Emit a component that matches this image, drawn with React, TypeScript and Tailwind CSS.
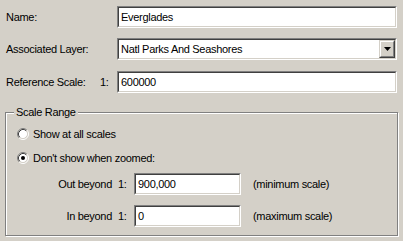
import React from "react";

const sunken =
  "border border-t-[#808080] border-l-[#808080] border-r-white border-b-white";
const sunkenInner =
  "border border-t-[#404040] border-l-[#404040] border-r-[#d4d0c8] border-b-[#d4d0c8]";

function Edit({ value, className }: { value: string; className: string }) {
  return (
    <div className={`${sunken} ${className} h-[22px]`}>
      <div className={`${sunkenInner} h-full bg-white flex items-center pl-[2px] whitespace-nowrap overflow-hidden`}>
        {value}
      </div>
    </div>
  );
}

function Radio({ checked }: { checked?: boolean }) {
  return (
    <svg width="12" height="12" viewBox="0 0 12 12" className="shrink-0">
      <circle cx="6" cy="6" r="4.5" fill="#fff" />
      <path d="M2.11 9.89 A5.5 5.5 0 0 1 9.89 2.11" stroke="#808080" fill="none" />
      <path d="M9.89 2.11 A5.5 5.5 0 0 1 2.11 9.89" stroke="#fff" fill="none" />
      <path d="M2.82 9.18 A4.5 4.5 0 0 1 9.18 2.82" stroke="#404040" fill="none" />
      <path d="M9.18 2.82 A4.5 4.5 0 0 1 2.82 9.18" stroke="#d4d0c8" fill="none" />
      {checked && <circle cx="6" cy="6" r="2" fill="#000" />}
    </svg>
  );
}

export default function App() {
  return (
    <div
      className="w-[403px] h-[241px] bg-[#d4d0c8] text-black overflow-hidden text-[11px] tracking-[-0.3px] leading-none pt-[6px]"
      style={{ fontFamily: '"Liberation Sans", Arial, sans-serif' }}
    >
      <div className="flex items-center pl-[6px]">
        <div className="w-[111px]">Name:</div>
        <Edit value="Everglades" className="w-[280px]" />
      </div>
      <div className="flex items-center pl-[6px] mt-[10px]">
        <div className="w-[111px]">Associated Layer:</div>
        <div className={`${sunken} w-[280px] h-[22px]`}>
          <div className={`${sunkenInner} h-full bg-white flex items-center`}>
            <div className="flex-1 pl-[2px] whitespace-nowrap overflow-hidden">Natl Parks And Seashores</div>
            <div className="w-[16px] h-[18px] bg-[#d4d0c8] border border-t-[#d4d0c8] border-l-[#d4d0c8] border-r-[#404040] border-b-[#404040]">
              <div className="h-full border border-t-white border-l-white border-r-[#808080] border-b-[#808080] flex items-center justify-center">
                <svg width="7" height="4" viewBox="0 0 7 4">
                  <path d="M0 0 H7 L3.5 4 Z" fill="#000" />
                </svg>
              </div>
            </div>
          </div>
        </div>
      </div>
      <div className="flex items-center pl-[6px] mt-[11px]">
        <div className="w-[94px]">Reference Scale:</div>
        <div className="w-[17px]">1:</div>
        <Edit value="600000" className="w-[280px]" />
      </div>

      <div className="relative ml-[5px] mt-[19px] w-[393px] h-[124px] border border-[#808080] shadow-[inset_1px_1px_0_#fff,1px_1px_0_#fff]">
        <span className="absolute left-[8px] top-[-6px] px-[2px] bg-[#d4d0c8]">Scale Range</span>
        <div className="pl-[11px] pt-[15px] flex flex-col">
          <div className="flex items-center gap-[4px] h-[12px]">
            <Radio />
            <span>Show at all scales</span>
          </div>
          <div className="flex items-center gap-[4px] h-[12px] mt-[12px]">
            <Radio checked />
            <span>Don't show when zoomed:</span>
          </div>
        </div>
        <div className="flex items-center mt-[9px]">
          <div className="w-[106px] text-right">Out beyond</div>
          <div className="w-[22px] pl-[6px]">1:</div>
          <Edit value="900,000" className="w-[107px]" />
          <div className="pl-[12px]">(minimum scale)</div>
        </div>
        <div className="flex items-center mt-[10px]">
          <div className="w-[106px] text-right">In beyond</div>
          <div className="w-[22px] pl-[6px]">1:</div>
          <Edit value="0" className="w-[107px]" />
          <div className="pl-[12px]">(maximum scale)</div>
        </div>
      </div>
    </div>
  );
}
